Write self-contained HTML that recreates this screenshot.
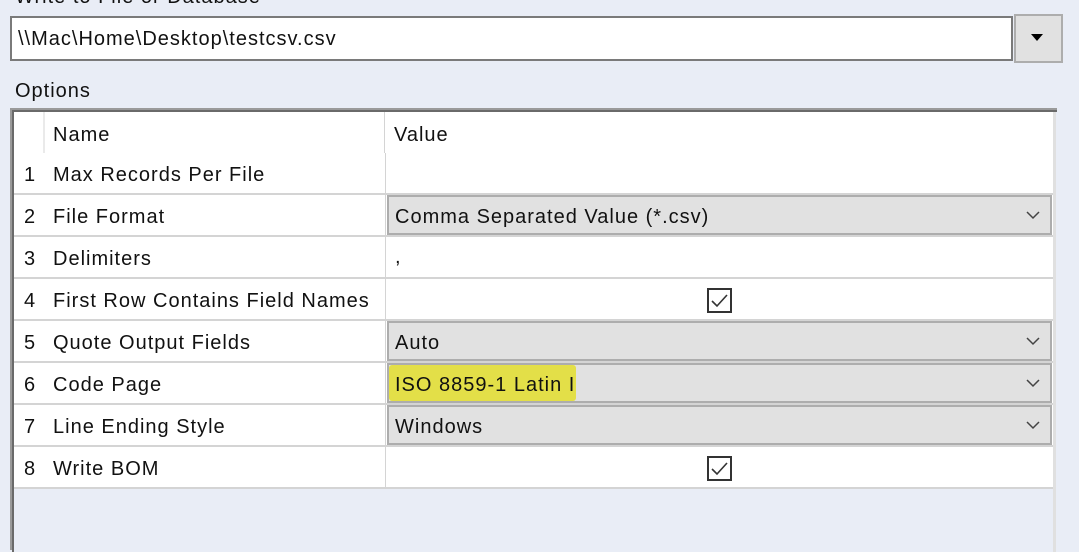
<!DOCTYPE html>
<html><head><style>
body{margin:0;width:1079px;height:543px;background:#e9edf6;font-family:"Liberation Sans",Arial,sans-serif;font-size:20px;letter-spacing:1px;color:#111;position:relative;overflow:hidden}
.a{position:absolute}
.row{position:absolute;left:14px;width:1039px;height:40px;border-bottom:2px solid #d4d4d4;background:#fff}
.n{position:absolute;left:10px;top:11px}
.nm{position:absolute;left:39px;top:11px}
.cell{position:absolute;left:371px;top:0;width:1px;height:42px;background:#d4d4d4}
.combo{position:absolute;left:373px;top:0;width:661px;height:36px;background:#e1e1e1;border:2px solid #adadad}
.combo span{position:absolute;left:6px;top:9px}
.chev{position:absolute;right:10px;top:14px}
.cb{position:absolute;left:693px;top:9px;width:21px;height:21px;border:2px solid #333;background:#fff}
</style></head><body>
<div class="a" style="left:15px;top:-14px">Write to File or Database</div>
<div class="a" style="left:10px;top:16px;width:999px;height:41px;background:#fff;border:2px solid #7a7a7a"></div>
<div class="a" style="left:18px;top:28px">\\Mac\Home\Desktop\testcsv.csv</div>
<div class="a" style="left:1014px;top:14px;width:45px;height:45px;background:#e1e1e1;border:2px solid #adadad"></div>
<svg class="a" style="left:1031px;top:34px" width="12" height="8"><path d="M0 0H12L6 7Z" fill="#000"/></svg>
<div class="a" style="left:15px;top:80px">Options</div>
<div class="a" style="left:10px;top:108px;width:1045px;height:440px;border-left:2px solid #9a9a9a;border-top:2px solid #9a9a9a"></div>
<div class="a" style="left:12px;top:110px;width:1043px;height:440px;border-left:2px solid #6a6a6a;border-top:2px solid #6a6a6a"></div>
<div class="a" style="left:1053px;top:112px;width:3px;height:440px;background:#e0e0e0"></div>
<div class="a" style="left:14px;top:112px;width:1039px;height:41px;background:#fff"></div>
<div class="a" style="left:43px;top:112px;width:2px;height:41px;background:#eaeaea"></div>
<div class="a" style="left:384px;top:112px;width:1px;height:41px;background:#d4d4d4"></div>
<div class="a" style="left:53px;top:124px">Name</div>
<div class="a" style="left:394px;top:124px">Value</div>

<div class="row" style="top:153px"><div class="n">1</div><div class="nm">Max Records Per File</div><div class="cell"></div></div>
<div class="row" style="top:195px"><div class="n">2</div><div class="nm">File Format</div><div class="cell"></div><div class="combo"><span>Comma Separated Value (*.csv)</span><svg class="chev" width="14" height="9"><path d="M1 1L7 7L13 1" stroke="#444" stroke-width="1.5" fill="none"/></svg></div></div>
<div class="row" style="top:237px"><div class="n">3</div><div class="nm">Delimiters</div><div class="cell"></div><div class="a" style="left:381px;top:9px">,</div></div>
<div class="row" style="top:279px"><div class="n">4</div><div class="nm">First Row Contains Field Names</div><div class="cell"></div><div class="cb"><svg width="21" height="21"><path d="M3 11L8 16L18 5" stroke="#333" stroke-width="1.6" fill="none"/></svg></div></div>
<div class="row" style="top:321px"><div class="n">5</div><div class="nm">Quote Output Fields</div><div class="cell"></div><div class="combo"><span>Auto</span><svg class="chev" width="14" height="9"><path d="M1 1L7 7L13 1" stroke="#444" stroke-width="1.5" fill="none"/></svg></div></div>
<div class="row" style="top:363px"><div class="n">6</div><div class="nm">Code Page</div><div class="cell"></div><div class="combo"><div class="a" style="left:0;top:0;width:187px;height:36px;background:#e3df48;border-radius:3px"></div><span>ISO 8859-1 Latin I</span><svg class="chev" width="14" height="9"><path d="M1 1L7 7L13 1" stroke="#444" stroke-width="1.5" fill="none"/></svg></div></div>
<div class="row" style="top:405px"><div class="n">7</div><div class="nm">Line Ending Style</div><div class="cell"></div><div class="combo"><span>Windows</span><svg class="chev" width="14" height="9"><path d="M1 1L7 7L13 1" stroke="#444" stroke-width="1.5" fill="none"/></svg></div></div>
<div class="row" style="top:447px"><div class="n">8</div><div class="nm">Write BOM</div><div class="cell"></div><div class="cb"><svg width="21" height="21"><path d="M3 11L8 16L18 5" stroke="#333" stroke-width="1.6" fill="none"/></svg></div></div>
</body></html>
